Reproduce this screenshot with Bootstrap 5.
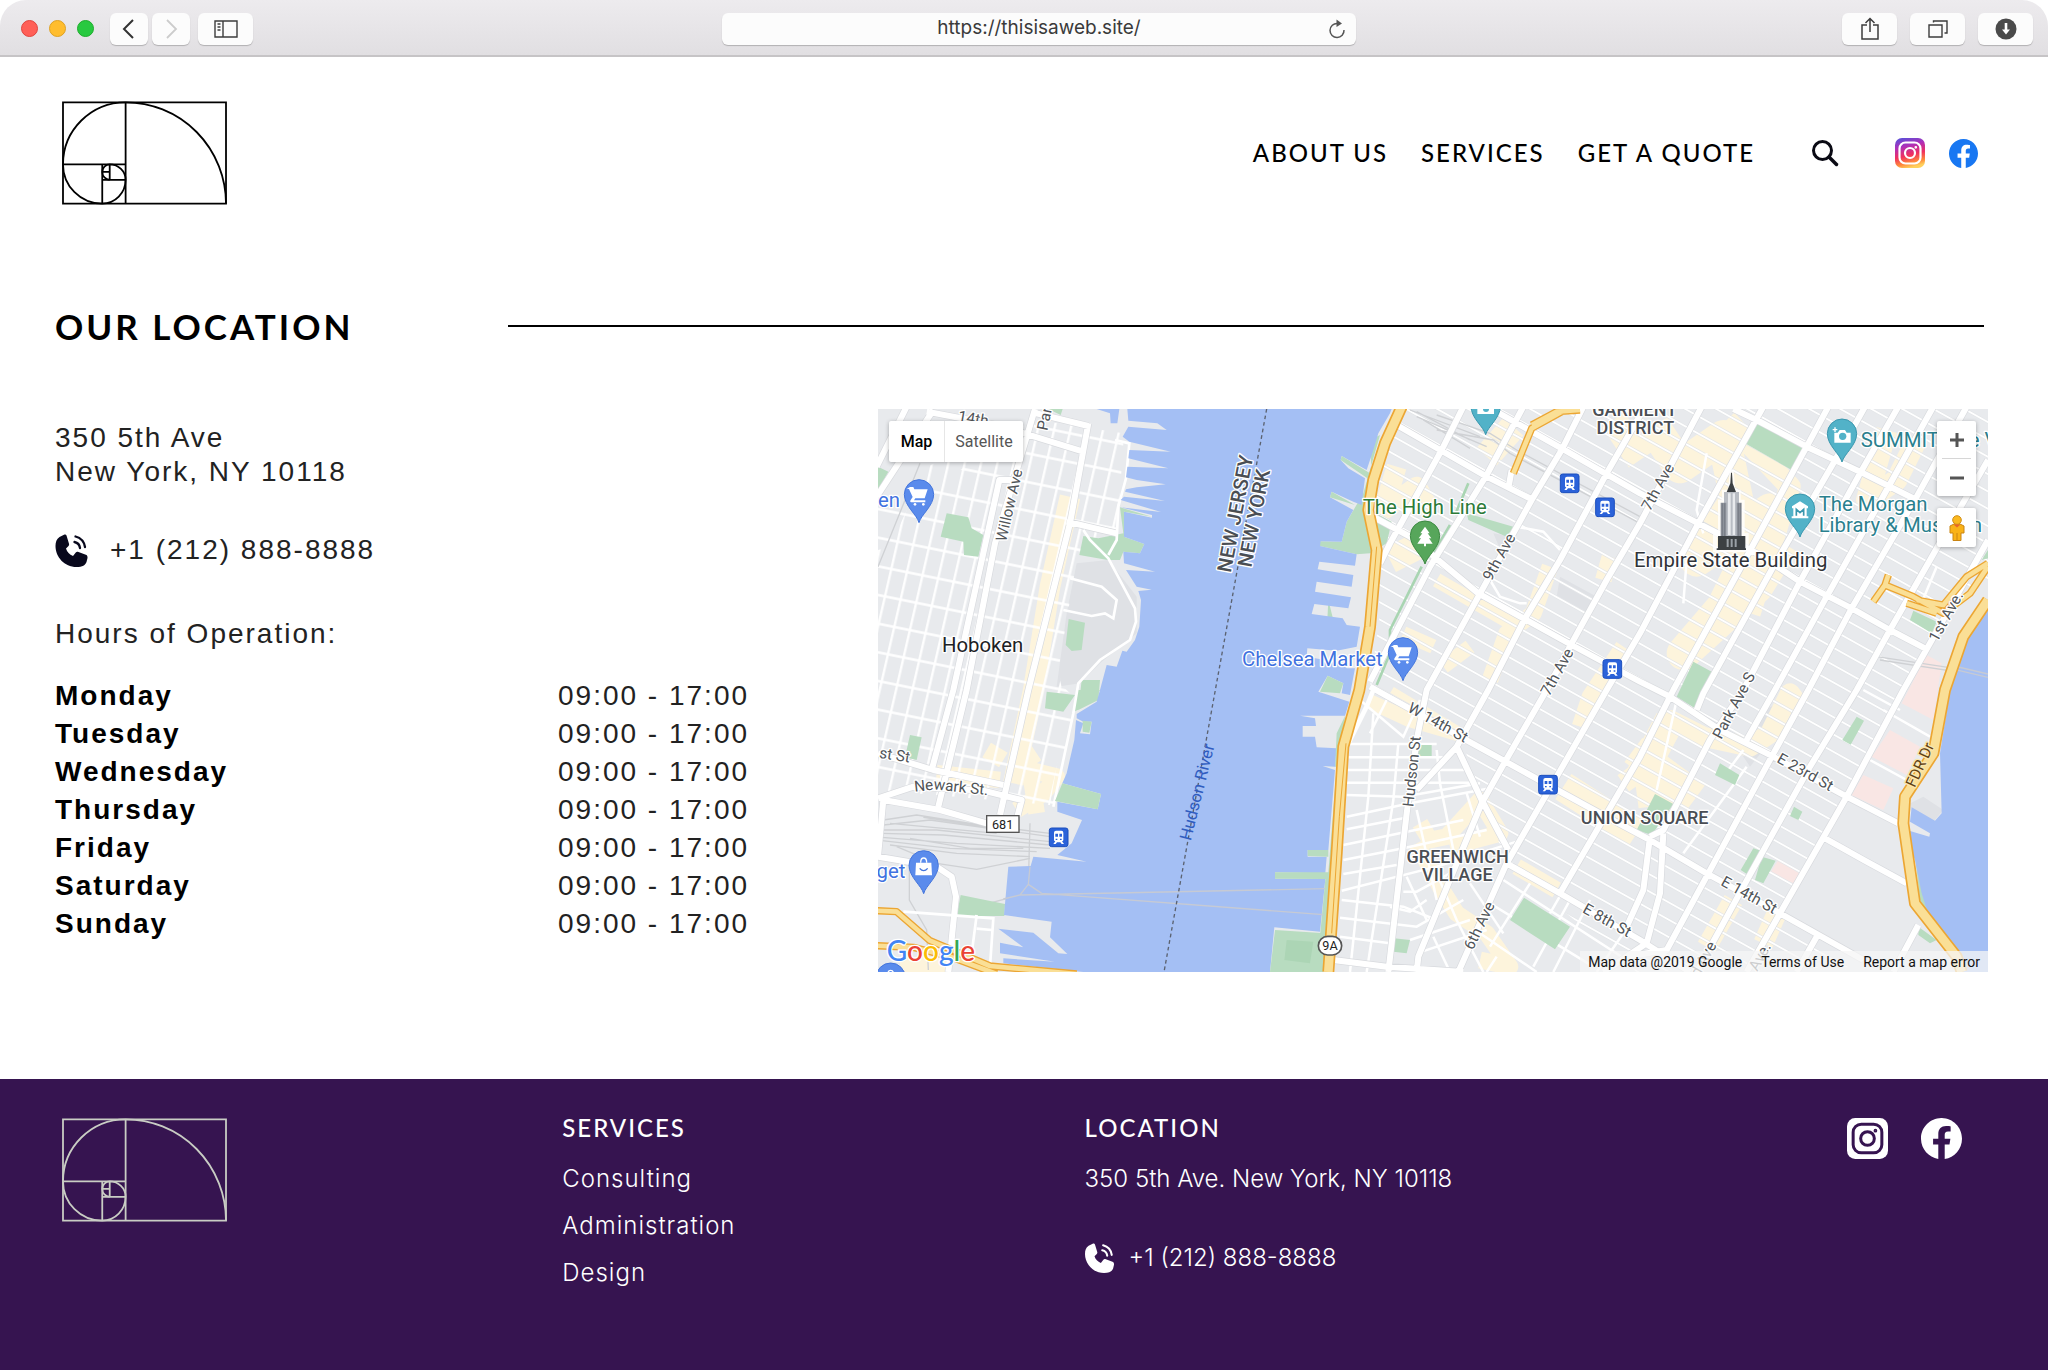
<!DOCTYPE html>
<html lang="en">
<head>
<meta charset="utf-8">
<meta name="viewport" content="width=device-width, initial-scale=1">
<title>Our Location</title>
<link href="https://cdn.jsdelivr.net/npm/bootstrap@5.3.0/dist/css/bootstrap.min.css" rel="stylesheet">
<style>
:root { --ink: #000; --plum: #361450; --edge: 55px; }
body { background: #fff; color: var(--ink); font-family: "Liberation Sans", Arial, sans-serif; }
svg { display: block; }
a { color: inherit; text-decoration: none; }

/* browser frame */
.chrome { height: 57px; background: linear-gradient(#edebee, #e1dfe2); border-bottom: 2px solid #c6c4c6; border-radius: 26px 26px 0 0; padding: 2px 15px 0 21px; display: grid; grid-template-columns: 701fr 634px 677fr; align-items: center; }
.dot { width: 17px; height: 17px; border-radius: 50%; border: 1px solid; }
.dot-r { background: #ff5f57; border-color: #e0443e; }
.dot-y { background: #ffbd2e; border-color: #dea123; }
.dot-g { background: #28c940; border-color: #1dad2b; }
.tool { height: 32px; padding: 0; border: 0; border-radius: 6px; background: #fcfcfc; box-shadow: 0 1px 1px rgba(0,0,0,.22); display: flex; align-items: center; justify-content: center; }
.tool-s { width: 38px; } .tool-m { width: 55px; }
.address-box { height: 32px; border-radius: 6px; background: #fcfcfc; box-shadow: 0 1px 1px rgba(0,0,0,.22); position: relative; }
.address-box input { width: 100%; height: 30px; border: 0; background: none; text-align: center; font: 19px/26px Inter, sans-serif; color: #3a3a3a; padding: 0; outline: 0; }
.address-box button { position: absolute; right: 10px; top: 6px; border: 0; background: none; padding: 0; }

/* site header */
.site-head { padding: 44px 70px 0 62px; height: 190px; }
.logo { width: 165px; height: 104px; }
.caps { font-family: Lato, sans-serif; font-weight: 500; letter-spacing: 2px; text-transform: uppercase; }
.site-nav { font-size: 24px; line-height: 30px; gap: 33px; }

/* location */
.wrap { padding: 0 60px 0 var(--edge); }
.title-row { display: grid; grid-template-columns: 453px 1fr; align-items: center; height: 158px; }
.title-row h1 { font-size: 35px; line-height: 40px; font-weight: 700; letter-spacing: 3px; margin: 0; }
.title-row hr { margin: 0 4px 0 0; border: 0; height: 2px; background: #000; opacity: 1; }
.place { display: grid; grid-template-columns: 823fr 1110fr; padding: 4px 0 107px; }
.info { font-size: 28px; line-height: 34px; letter-spacing: 2px; padding-top: 12px; color: #222; }
.info address { margin: 0; }
.phone { gap: 22px; margin-top: 44px; }
.hours-title { font-size: 28px; line-height: 34px; font-weight: 400; margin: 50px 0 26px; }
.hours th, .hours td { padding: 0; line-height: 38px; }
.hours th { font-weight: 700; text-align: left; width: 503px; color: #000; }

/* map */
.map { position: relative; aspect-ratio: 1110 / 563; overflow: hidden; font-family: Roboto, sans-serif; align-self: start; }
.map > svg { width: 100%; height: 100%; }
.map-card { position: absolute; background: #fff; border-radius: 2px; box-shadow: 0 1px 4px rgba(0,0,0,.3); }
.map-card button { border: 0; background: none; padding: 0; }
.map-type { left: 11px; top: 12px; height: 41px; font-size: 16px; }
.map-type button { height: 41px; width: 55px; font-weight: 500; color: #000; }
.map-type button + button { width: 79px; border-left: 1px solid #e6e6e6; font-weight: 400; color: #565656; }
.map-zoom { right: 12px; top: 12px; width: 39px; }
.map-zoom button { width: 39px; height: 37px; display: flex; align-items: center; justify-content: center; }
.map-zoom span { display: block; height: 1px; background: #d6d6d6; margin: 0 5px; }
.map-man { right: 12px; top: 99px; width: 39px; height: 39px; }
.map-man button { width: 39px; height: 39px; display: flex; align-items: center; justify-content: center; }
.map-credit { position: absolute; right: 0; bottom: 0; height: 21px; padding: 2px 8px 0; font-size: 14px; line-height: 19px; gap: 19px; color: #111; background: rgba(245,245,245,.75); white-space: nowrap; }
.place-name { font: 61px Roboto, sans-serif; }
.area-name { font: 500 54px Roboto, sans-serif; fill: #4a4e54; }
.state-name { font-size: 60px; }
.street-name { font: 46px Roboto, sans-serif; fill: #505458; }
.river-name { font: 50px Roboto, sans-serif; }
.halo text { paint-order: stroke; stroke: #fff; stroke-width: 8px; stroke-linejoin: round; }
.halo .river-name { fill: #2f5cc0; stroke: none; }
.halo .drive-name { fill: #5f4014; stroke: #fbe6ad; }
.google { font: 500 84px Lato, sans-serif; }

/* footer */
.site-foot { background: var(--plum); color: #fff; height: 291px; padding: 39px 86px 0 62px; font: 300 24px/30px Inter, sans-serif; letter-spacing: 1px; display: grid; grid-template-columns: 500fr 522fr 762fr auto; align-items: start; }
.site-foot h2 { font-size: 24px; line-height: 24px; margin: -2px 0 0; }
.site-foot ul { margin: 24px 0 0; }
.site-foot li { padding-bottom: 17px; }
.foot-place ul { letter-spacing: 0; }
</style>
<script src="https://cdn.jsdelivr.net/npm/bootstrap@5.3.0/dist/js/bootstrap.bundle.min.js"></script>
</head>
<body>

<svg width="0" height="0" class="position-absolute" aria-hidden="true">
  <defs>
    <symbol id="fib" viewBox="-1 -1 166 104"><g fill="none" stroke="currentColor" stroke-width="1.8"><path d="M0 0H164V102H0ZM63 0V102M0 62.5H63M39.5 62.5V102M39.5 78H63M47 62.5V78M39.5 70H47"/><path d="M164 102A101 102 0 0 0 63 0A63 62.500 0 0 0 0 62.500A39.500 39.500 0 0 0 39.500 102A23.500 24 0 0 0 63 78A16 15.500 0 0 0 47 62.500A7.500 7.500 0 0 0 39.500 70A8 8 0 0 0 47 78"/></g></symbol>
    <symbol id="call" viewBox="0 0 32 33"><path fill="currentColor" d="M9 .5 4 3C1 5 0 8 0 12 0 23 9 33 21 33c6 0 9-2 10-5l1-4c.2-1.500-.3-2.300-1-3l-8-3c-1.300-.5-2-.3-2.700.5L17.500 22C14 20.500 11.500 18 10.500 14.500L13 12c.6-.7.8-1.400.5-2.200L11 1.500C10.600.5 10 .2 9 .5Z"/><path fill="none" stroke="currentColor" stroke-width="2.300" stroke-linecap="round" d="M20 2.500A13 13 0 0 1 29.500 13M19 8A7 7 0 0 1 24.500 14"/></symbol>
    <symbol id="fb" viewBox="0 0 16 16"><path fill="currentColor" d="M16 8.049c0-4.446-3.582-8.05-8-8.05C3.580 0-.002 3.603-.002 8.050c0 4.017 2.926 7.347 6.750 7.951v-5.625h-2.030V8.050H6.750V6.275c0-2.017 1.195-3.131 3.022-3.131.876 0 1.791.157 1.791.157v1.980h-1.009c-.993 0-1.303.621-1.303 1.258v1.510h2.218l-.354 2.326H9.250V16c3.824-.604 6.750-3.934 6.750-7.951"/></symbol>
    <linearGradient id="ig1" x1=".2" y1="0" x2=".45" y2="1"><stop offset="0" stop-color="#5b4fd8"/><stop offset=".3" stop-color="#b02fb8"/><stop offset=".6" stop-color="#f0305f"/><stop offset=".85" stop-color="#ff8a3a"/><stop offset="1" stop-color="#ffd15c"/></linearGradient>
    <symbol id="ig" viewBox="0 0 30 30"><g fill="none" stroke-width="2.200"><rect x="4.500" y="4.500" width="21" height="21" rx="6"/><circle cx="15" cy="15" r="5"/><circle cx="20.800" cy="9.300" r=".6" stroke-width="1.500"/></g></symbol>
    <path id="pin" d="M0 0C-6-24-44-50-44-85A44 44 0 1 1 44-85C44-50 6-24 0 0Z"/>
    <g id="cart" fill="#fff"><path d="M-27-107h10l3 7h40l-9 27h-28l-4 6h34v6h-42c-4 0-4-4-2-7l6-9-11-24h-7z"/><circle cx="-12" cy="-55" r="4"/><circle cx="13" cy="-55" r="4"/></g>
    <g id="metro"><rect x="-28" y="-28" width="56" height="56" rx="7" fill="#2b62d9" stroke="#1c4fbd" stroke-width="3"/><path fill="#fff" d="M-14-14q0-6 6-6h16q6 0 6 6v22q0 4-4 4l6 8h-7l-4-5h-10l-4 5h-7l6-8q-4 0-4-4z"/><path fill="#2b62d9" d="M-10-11h8v9h-8zM2-11h8v9H2zM-9 4h5v4h-5zM4 4h5v4H4z"/></g>
    <pattern id="xst" width="200" height="52" patternUnits="userSpaceOnUse" patternTransform="translate(0 -14) skewY(29.2)"><path d="M0 26H200" stroke="#d9dbdf" stroke-width="10"/><path d="M0 26H200" stroke="#fff" stroke-width="7.500"/></pattern>
    <pattern id="hobH" width="200" height="86" patternUnits="userSpaceOnUse" patternTransform="translate(0 24) skewY(11.5)"><path d="M0 40H200" stroke="#fff" stroke-width="7"/></pattern>
    <pattern id="hobV" width="49" height="200" patternUnits="userSpaceOnUse" patternTransform="translate(10 0) skewX(-13)"><path d="M24 0V200" stroke="#fff" stroke-width="7"/></pattern>
    <path id="majors" fill="none" stroke-linejoin="round" d="M1530 490 1560 430 1715 150 1780 20M1500 845 1680 500 1850 225 1960 20M1915 265 1925 210M1555 1716 1610 1240 1640 1020 1670 870 1825 590 1985 300 2075 150 2140 20M1640 1170 1760 1040 1855 870 1965 655 2070 480 2210 220 2325 20M1760 1040 1835 1200 1915 1350M1640 1716 1645 1670 1760 1390 1835 1210 1905 1085 2030 870 2105 730 2210 540 2310 370 2495 20M1765 1716 1910 1390 2210 870 2310 700 2485 370 2680 20M2070 1480 2310 1070 2410 870 2630 470 2810 140 2875 20M2480 930 2500 880 2710 500 2890 190 2985 20M2340 1310 2380 1290 2520 1020 2620 870 2790 545 2970 220 3085 20M2630 1020 2715 870 2870 590 3050 270 3190 20M2270 1670 2390 1650 2515 1420 2705 1070 2815 870 2945 625 3140 290 3290 20M2480 1716 2620 1460 2820 1100 2960 870 3060 690 3220 410 3354 180M2630 1716 2730 1540 2930 1190 3100 870 3180 730 3354 420M2340 1310 2320 1470 2270 1580M2380 1300 2370 1480 2330 1630 2200 1716M2840 1610 2780 1716M3145 1575 3070 1716M1580 75 1850 230 1990 300M1870 30 2075 145 2310 280 2485 370 2670 465 2790 545 2945 625 3060 690 3165 745M1500 345 1620 410 1825 580 2105 735 2310 845 2400 890 2550 990 2710 1070 2930 1190 3085 1270M1500 860 1770 1010 2190 1240 2340 1320 2510 1420 2730 1540 2980 1680M1910 1390 2070 1480 2310 1620 2460 1716M2590 27 2660 60 2810 140 2970 215 3140 300M2865 1315 2990 1385 3110 1450M1390 1680 1550 1700 1780 1716M655 70 600 370 475 870 390 1245M430 240H388L250 870 185 1110M495 27 375 430 290 870 205 1220M170 35 380 75 640 155M500 40 655 78M590 365 740 400M24 1060 190 1110 400 1155M24 1195 130 1160 340 1172 455 1200 442 1250M40 1200 210 1230 350 1270M40 1200 24 1370 200 1400 245 1430 258 1490 235 1716M110 20 20 200M190 30 20 290"/>
    <path id="shore-roads" fill="none" stroke-linejoin="round" d="M1595 20 1545 130 1510 240 1495 330 1520 450 1500 680 1468 870 1420 1040 1400 1360 1375 1716M3354 600 3280 710 3225 870 3190 1060 3105 1190 3100 1270 3135 1510 3260 1670 3275 1716"/>
    <path id="ramps" fill="none" stroke-linejoin="round" d="M20 1532 80 1535 180 1622 360 1698 620 1722M20 1637 130 1642 240 1670 380 1722M1930 220 1985 85 2090 27M1985 75 2060 35 2130 30M3354 490 3290 530 3220 615 3140 600M3010 605 3045 555 3130 590 3220 640 3300 580 3354 500M3110 610 3200 640M3045 555 3055 525"/>
  </defs>
</svg>

<div class="chrome">
  <div class="d-flex align-items-center">
    <span class="d-flex me-3" style="gap:11px"><i class="dot dot-r"></i><i class="dot dot-y"></i><i class="dot dot-g"></i></span>
    <button class="tool tool-s" aria-label="Back" type="button"><svg width="14" height="20" viewBox="0 0 14 20" fill="none" stroke="#333" stroke-width="2"><path d="M11 1 2 10l9 9"/></svg></button>
    <button class="tool tool-s ms-1" aria-label="Forward" type="button"><svg width="14" height="20" viewBox="0 0 14 20" fill="none" stroke="#ccc" stroke-width="1.800"><path d="m3 1 9 9-9 9"/></svg></button>
    <button class="tool tool-m ms-2" aria-label="Sidebar" type="button"><svg width="24" height="18" viewBox="0 0 24 18" fill="none" stroke="#3d3d3d" stroke-width="1.400"><path d="M1 1H23V17H1ZM9 1V17M3.500 4h3M3.500 7h3M3.500 10h3"/></svg></button>
  </div>
  <div class="address-box"><label class="visually-hidden" for="url">Address</label><input id="url" type="text" value="https://thisisaweb.site/">
    <button aria-label="Reload" type="button"><svg width="18" height="20" viewBox="0 0 18 20"><path d="M9.500 4.500A7 7 0 1 0 16 11" fill="none" stroke="#555" stroke-width="1.500"/><path d="m8.500.5 5.500 4-5.500 3.500Z" fill="#555"/></svg></button></div>
  <div class="d-flex justify-content-end" style="gap:13px">
    <button class="tool tool-m" aria-label="Share" type="button"><svg width="18" height="24" viewBox="0 0 18 24" fill="none" stroke="#3d3d3d" stroke-width="1.500"><path d="M6 8H1V22H17V8H12M9 15V2M4.500 6 9 1.500 13.500 6"/></svg></button>
    <button class="tool tool-m" aria-label="Tabs" type="button"><svg width="20" height="20" viewBox="0 0 20 20" fill="none" stroke="#3d3d3d" stroke-width="1.400"><path d="M1 6H14V18H1ZM5.500 3.500V2H19V14H16.500"/></svg></button>
    <button class="tool tool-m" aria-label="Downloads" type="button"><svg width="22" height="22" viewBox="0 0 22 22"><circle cx="11" cy="11" r="10.500" fill="#4a4a4a"/><path d="M9.700 5h2.600v6.500H15l-4 5-4-5h2.700Z" fill="#fff"/></svg></button>
  </div>
</div>

<header class="site-head d-flex justify-content-between align-items-start">
  <a href="#" aria-label="Home"><svg class="logo"><use href="#fib"/></svg></a>
  <nav class="d-flex align-items-center logo w-auto">
    <div class="site-nav caps d-flex"><a href="#">About us</a><a href="#">Services</a><a href="#">Get a quote</a></div>
    <a href="#" class="ms-5 ps-2" aria-label="Search"><svg width="28" height="28" viewBox="0 0 28 28" fill="none" stroke="#0a0a14" stroke-width="3"><circle cx="11.500" cy="11.500" r="9"/><path d="m18 18 7.500 7.500" stroke-linecap="round" stroke-width="3.500"/></svg></a>
    <a href="#" class="ms-5 ps-2" aria-label="Instagram"><svg width="30" height="30" viewBox="0 0 30 30"><rect width="30" height="30" rx="7" fill="url(#ig1)"/><use href="#ig" stroke="#fff"/></svg></a>
    <a href="#" class="ms-4" aria-label="Facebook"><svg width="29" height="29" color="#1877f2"><use href="#fb"/></svg></a>
  </nav>
</header>

<main class="wrap">
  <div class="title-row"><h1 class="caps">Our location</h1><hr></div>
  <div class="place">
    <section class="info">
      <address>350 5th Ave<br>New York, NY 10118</address>
      <a class="phone d-flex align-items-center" href="tel:+12128888888"><svg width="33" height="33" color="#08081c"><use href="#call"/></svg>+1 (212) 888-8888</a>
      <h2 class="hours-title">Hours of Operation:</h2>
      <table class="hours">
        <tbody>
          <tr><th scope="row">Monday</th><td>09:00 - 17:00</td></tr>
          <tr><th scope="row">Tuesday</th><td>09:00 - 17:00</td></tr>
          <tr><th scope="row">Wednesday</th><td>09:00 - 17:00</td></tr>
          <tr><th scope="row">Thursday</th><td>09:00 - 17:00</td></tr>
          <tr><th scope="row">Friday</th><td>09:00 - 17:00</td></tr>
          <tr><th scope="row">Saturday</th><td>09:00 - 17:00</td></tr>
          <tr><th scope="row">Sunday</th><td>09:00 - 17:00</td></tr>
        </tbody>
      </table>
    </section>

    <section class="map" aria-label="Map">
      <svg viewBox="24 27 3330 1689" preserveAspectRatio="xMidYMid slice">
        <rect x="24" y="27" width="3330" height="1689" fill="#e8eaed"/>
        <!-- darker blocks -->
        <g fill="#dfe1e5"><path d="M620 490 715 480 800 590 800 700 690 790 630 850 560 860 590 640Z"/><path d="M2070 530 2180 590 2160 650 2060 590ZM1870 400 1930 410 1900 470ZM2680 930 2750 900 2720 1010 2660 980ZM2600 1040 2680 1050 2640 1100ZM3100 1220 3160 1190 3220 1230 3190 1265Z"/></g>
        <!-- commercial blocks -->
        <g fill="none" stroke="#fdf4dc" stroke-linejoin="round">
          <path d="M600 290 540 560 490 870 430 1150" stroke-width="62"/>
          <path d="M350 1050 400 1080M200 1120 390 1140M470 1080 500 1060M440 1230 520 1180 560 1130 480 1110 500 1240" stroke-width="50"/>
          <path d="M1580 200 1540 330 1640 260 1680 330" stroke-width="60"/>
          <path d="M1850 170 1930 80M2230 60 2310 180M1640 440 1560 480" stroke-width="80"/>
          <path d="M1500 905 1620 960 1760 1000 1560 880M1600 700 1690 740M1700 540 1960 690M1800 740 1720 800" stroke-width="44"/>
          <path d="M2350 80 2430 200 2560 110 2600 300 2480 480 2700 330 2560 620 2440 760 2660 560 2740 430" stroke-width="100"/>
          <path d="M2570 60 2760 260 2640 640M3050 90 2990 300 3080 240 3140 120" stroke-width="64"/>
          <path d="M2040 500 1990 640 1910 700 1860 840M2200 540 2220 470M2130 980 2160 890 2260 740" stroke-width="50"/>
          <path d="M2260 1150 2330 1100 2400 960 2500 1010 2640 1040 2700 1000 2760 880 2790 920" stroke-width="60"/>
          <path d="M2300 1180 2450 1160M2290 1050 2480 1190M2080 1160 2300 1300M2310 1130 2400 960" stroke-width="90"/>
          <path d="M1650 1270 1680 1320 1730 1310 1830 1200 1890 1300 1740 1340M1640 1330 1710 1460 1760 1540 1850 1600 1920 1700 1830 1680M1940 1400 2060 1470" stroke-width="50"/>
          <path d="M2590 1500 2510 1640M2720 1540 2680 1630M90 1700 230 1700" stroke-width="60"/>
        </g>
        <g fill="#f9e6e4"><path d="M3170 765 3215 790 3190 960 3095 910ZM3060 990 3150 1040 3110 1125 3005 1070ZM2980 1125 3070 1165 3040 1230 2945 1185ZM2725 1380 2790 1420 2770 1450 2700 1420Z"/></g>

        <!-- minor streets -->
        <path fill="url(#hobH)" d="M24 300 240 230 500 60 760 130 740 420 620 480 560 840 620 900 550 1215 24 1170Z"/>
        <path fill="url(#hobV)" d="M24 450 60 440 170 200 500 60 760 100 740 420 620 480 570 840 590 920 540 1215 24 1170Z"/>
        <path fill="url(#xst)" d="M1570 27H3354V540L3240 640 3165 745 3020 1010 2930 1190 2730 1540 2980 1700 2300 1716 1910 1390 1770 1010 1500 860 1530 640 1510 340Z"/>
        <g fill="none" stroke="#fff" stroke-width="7.500">
          <path d="M1440 1032H1700M1430 1072H1730M1430 1110H1790M1430 1148H1800M1430 1185 1600 1190 1830 1150M1430 1250 1620 1210 1860 1165M1430 1288 1600 1255M1420 1335 1780 1260M1420 1380 1600 1345 1850 1290M1420 1422 1580 1395M1415 1472 1700 1400 1940 1325M1415 1500 1600 1520 1700 1560M1410 1553 1640 1580 1780 1500M1410 1610 1560 1630M1620 1620 1800 1560M1640 1660 1850 1590M1600 1475 1640 1475 1740 1420M1560 1520 1620 1535 1670 1500"/>
          <path d="M1510 940 1495 1190 1440 1716M1585 1030 1570 1200 1490 1716M1550 900 1500 1000M1470 900 1600 1010 1650 900M1640 1230 1700 1500M1700 1050 1710 1150 1750 1350M1790 1180 1830 1310M1610 1430 1670 1560M1700 1420 1760 1560 1800 1640 1840 1716M1800 1450 1900 1600M1690 1610 1740 1716"/>
          <path d="M1900 1440 2270 1680M1860 1510 2170 1700M1830 1600 2000 1716M1980 1450 1860 1640M2100 1500 1990 1700M2160 1500 2050 1716M2260 1600 2180 1716M1880 1670 1850 1716M2040 1540 2270 1140"/>
          <path d="M2420 900 2360 1170M2500 400 2480 330 2510 160M2450 480 2440 610M2630 1100 2440 1360M3200 500 3150 620M2560 1130 2620 1050M3040 930 3180 1010M3000 1080 3110 1140M2980 870 3090 930"/>
          <path d="M1860 540 1890 590 1950 610 1970 610M1940 380 2020 395 2070 450"/>
        </g>
        <path fill="#e8eaed" d="M2885 1335 3110 1455 3140 1560 3080 1680 3000 1690 2745 1545Z"/>

        <!-- rail yards -->
        <g fill="none" stroke="#cfd1d4" stroke-width="4">
          <path d="M40 1260 140 1245 330 1275 540 1300M40 1275 180 1260 540 1310M36 1290 200 1290 540 1325M36 1300 220 1305 540 1335M36 1312 260 1330 540 1345M36 1322 240 1345 500 1355M60 1335 260 1360 480 1370M80 1340 200 1390 320 1408 480 1375M60 1270 220 1285 380 1300M120 1315 300 1345 460 1345M160 1252 420 1290"/>
          <path d="M480 1270 475 1453 450 1485 365 1508 335 1545M475 1453 515 1480M450 1485 1366 1466M515 1480 1360 1544M118 1400 118 1500 170 1590 175 1710M24 500 150 190"/>
          <path d="M1620 30 1830 110M1640 50 1850 140M1660 60 1800 145M1700 90 1870 120 1920 160 2310 370M1700 45 1860 100 1940 150 2310 350M1640 35 1800 120M3020 770 3354 820M3030 780 3354 830"/>
        </g>

        <!-- parks -->
        <g fill="#b8dcc0">
          <path d="M230 340 295 352 305 385 340 405 325 470 282 465 280 425 212 410ZM596 657 645 668 635 750 605 753 587 735ZM640 408 685 415 760 400 750 322 846 350 762 335 762 410 823 432 810 460 760 455 750 480 713 480 628 465ZM530 875 615 885 580 935 525 925ZM620 870 690 870 665 910 612 935ZM635 840 690 840 685 900 625 930ZM120 1005 155 1012 140 1080 105 1072ZM272 1485 405 1512 403 1548 260 1548ZM535 27H578L572 45ZM24 200 55 215 24 270Z"/>
          <path d="M1565 365 1510 335 1500 120 1530 105 1480 280 1430 365 1415 425 1350 424 1350 438 1460 463 1500 460 1550 430ZM1790 340 1930 380 1910 410 1795 360ZM1375 600 1400 700H1370Z"/>
          <path d="M2660 63 2800 140 2765 210 2625 130ZM2470 785 2525 815 2475 925 2420 890ZM2355 1182 2410 1212 2345 1305 2300 1290ZM2550 1090 2608 1125 2595 1155 2535 1125ZM2960 950 2982 962 2942 1034 2917 1020ZM2772 1220 2797 1235 2785 1260 2760 1248ZM2650 1345 2672 1352 2635 1425 2612 1410ZM2675 1370 2717 1382 2680 1450 2655 1440ZM3130 632 3200 665 3185 700 3120 660ZM3145 1580 3200 1620 3180 1630 3145 1605ZM3135 1365 3175 1540 3150 1500ZM1962 1493 2100 1580 2055 1648 1920 1560ZM1645 1035H1685V1068H1640ZM1572 1615 1620 1620 1610 1660 1570 1655ZM3354 450 3335 480 3354 475Z"/>
        </g>
        <path d="M1795 250 1755 345M1740 375 1690 460M1655 500 1560 690 1560 740M1560 760 1520 855" fill="none" stroke="#a9d5b2" stroke-width="8"/>

        <!-- avenues and wide streets -->
        <use href="#majors" stroke="#d8dade" stroke-width="22"/>
        <use href="#majors" stroke="#fff" stroke-width="18"/>
        <path fill="none" stroke="#fff" stroke-width="8" d="M640 390 660 420 715 475 795 625 798 665 780 720 690 780 625 850 610 940 550 1220M600 535 695 560 740 600 730 655 705 640 665 648 580 630M735 120 778 130 768 235 745 320 740 420 715 465M100 1535 370 1555 360 1700M320 1545 300 1700M320 1586 365 1590"/>

        <!-- Hudson and East River -->
        <path fill="#a4bff4" d="M772 27 775 62 862 70 890 90 775 80 758 110 778 125 902 155 778 150 775 175 895 205 772 200 768 232 800 240 887 253 800 262 768 268 765 275 885 303 762 290 752 300 873 336 752 322 846 345V353L762 335V410L823 432 810 460 760 455 762 490 855 515 768 510 800 560 845 569 805 573 813 600 808 680 795 720 770 755 757 752 740 800 710 795 690 870 680 905 620 942 620 955 640 965 665 965 660 1003 630 1000 640 970 618 960 613 1020 590 1120 577 1150 693 1182 683 1228 562 1205V1235L636 1260 605 1330 562 1365 650 1385 490 1370 482 1398 415 1400 402 1545 545 1565 540 1612 592 1662 565 1660 490 1598 385 1586 460 1642 390 1628V1660L555 1685 400 1675V1690L640 1716H1200L1213 1582 1350 1595 1366 1437 1215 1436V1417L1366 1420 1370 1370H1313V1350H1375L1395 1110 1358 1098 1395 1100 1400 1045 1340 1042 1335 1010H1298V978H1338L1335 955 1290 947H1425L1438 905 1345 875 1373 827 1420 850 1415 880 1440 885 1455 805H1430L1420 790 1310 770 1312 745 1400 752 1460 740 1470 680 1430 675 1418 655 1325 642 1333 612 1435 625 1443 592 1335 575 1340 545 1445 560 1450 525 1343 508 1348 485 1455 497 1460 463 1350 438 1352 424 1415 425 1430 365 1450 330 1380 292 1385 275 1450 305 1475 315 1485 235 1435 205 1412 180 1415 168 1490 210 1510 150 1525 100 1560 40 1565 27Z"/>
        <path fill="#a4bff4" d="M680 27H748L742 70H722L720 40ZM3354 630 3280 730 3245 800 3240 870 3210 1060 3215 1240 3195 1262 3125 1222 3120 1265 3180 1300 3178 1310 3110 1290V1310L3135 1380 3155 1480 3180 1560 3245 1640 3270 1716H3354Z"/>
        <g fill="#b8dcc0"><path d="M1200 1716 1215 1590 1365 1600 1355 1716ZM1215 1436V1417H1375L1400 1100 1358 1098 1395 1100 1400 1000 1425 948 1410 1110 1360 1716H1340L1366 1437ZM1313 1368V1350H1375V1370ZM1380 292 1385 275 1455 315ZM1412 180 1415 168 1500 220 1500 240ZM1350 875 1373 827 1420 850 1410 880ZM577 1150 693 1182 683 1228 555 1203ZM638 962 665 965 658 998 638 995Z"/></g>
        <path d="M1250 1620 1330 1625 1320 1690 1243 1680Z" fill="#acd5b5"/>
        <g fill="none" stroke="#c6cad4" stroke-width="4"><path d="M480 1400 475 1453 450 1485 400 1497M475 1453 515 1480M450 1485 1366 1466M515 1480 1360 1544M3240 795 3354 822M3240 805 3354 832"/></g>
        <path d="M1190 27 1036 870 882 1716" fill="none" stroke="#5b6270" stroke-width="4" stroke-dasharray="11 9"/>
        <path d="M1510 870 1490 920 1430 1040" fill="none" stroke="#fff" stroke-width="14"/>

        <!-- highways -->
        <use href="#shore-roads" stroke="#eca633" stroke-width="36"/>
        <use href="#ramps" stroke="#eca633" stroke-width="22"/>
        <use href="#shore-roads" stroke="#fadf96" stroke-width="26"/>
        <use href="#ramps" stroke="#fadf96" stroke-width="14"/>
        <path fill="none" stroke="#eca633" stroke-width="3" d="M1428 1030 1408 1250 1385 1600M1520 440 1500 680"/>

        <!-- labels -->
        <g class="halo">
          <g class="street-name">
            <text transform="translate(262 63) rotate(10)">14th</text>
            <text transform="translate(532 94) rotate(-78)">Park</text>
            <text transform="translate(408 427) rotate(-77)">Willow Ave</text>
            <text transform="translate(26 1073) rotate(9)">st St</text>
            <text transform="translate(134 1175) rotate(-6)">Ne</text><text transform="translate(190 1168) rotate(6)">wark St.</text>
            <text transform="translate(1864 545) rotate(-61)">9th Ave</text>
            <text transform="translate(2038 890) rotate(-61)">7th Ave</text>
            <text transform="translate(2340 335) rotate(-61)">7th Ave</text>
            <text transform="translate(1610 933) rotate(29)">W 14th St</text>
            <text transform="translate(1630 1222) rotate(-84)">Hudson St</text>
            <text transform="translate(1808 1652) rotate(-64)">6th Ave</text>
            <text transform="translate(2135 1536) rotate(29)">E 8th St</text>
            <text transform="translate(2550 1454) rotate(29)">E 14th St</text>
            <text transform="translate(2718 1085) rotate(29)">E 23rd St</text>
            <text transform="translate(2554 1020) rotate(-62)">Park Ave S</text>
            <text transform="translate(3202 728) rotate(-61)">1st Ave.</text>
            <text transform="translate(2466 1770) rotate(-61)">3rd Ave</text>
            <text transform="translate(2662 1716) rotate(-61)">Ave.</text>
            <text class="drive-name" transform="translate(3134 1165) rotate(-65)">FDR Dr</text>
          </g>
          <g class="area-name" text-anchor="middle">
            <text class="state-name" transform="translate(1116 345) rotate(-79)">NEW JERSEY</text>
            <text class="state-name" transform="translate(1172 358) rotate(-79)">NEW YORK</text>
            <text x="2294" y="47">GARMENT</text><text x="2296" y="102">DISTRICT</text>
            <text x="2324" y="1272">UNION SQUARE</text>
            <text x="1763" y="1389">GREENWICH</text><text x="1762" y="1444">VILLAGE</text>
          </g>
          <text class="river-name" transform="translate(962 1324) rotate(-76)">Hudson River</text>
          <g class="place-name">
            <text x="216" y="755" fill="#202124">Hoboken</text>
            <text x="2292" y="502" fill="#303338">Empire State Building</text>
            <g fill="#2c7a38"><text x="1478" y="342">The High Line</text></g>
            <g fill="#3f72e0"><text x="1116" y="797">Chelsea Market</text><text x="90" y="320" text-anchor="end">en</text><text x="106" y="1433" text-anchor="end">get</text></g>
            <g fill="#2a808e"><text x="2972" y="140">SUMMIT One V</text><text x="2846" y="333">The Morgan</text><text x="2846" y="396">Library &amp; Museum</text></g>
          </g>
        </g>

        <!-- pins -->
        <g stroke-width="3">
          <g transform="translate(147 368)"><use href="#pin" fill="#5a8bec" stroke="#4375dc"/><use href="#cart"/></g>
          <g transform="translate(1599 842)"><use href="#pin" fill="#5a8bec" stroke="#4375dc"/><use href="#cart"/></g>
          <g transform="translate(161 1481)"><use href="#pin" fill="#5a8bec" stroke="#4375dc"/><path d="M-23-93H23L25-55H-25Z" fill="#fff"/><path d="M-9-93q0-14 9-14t9 14" fill="none" stroke="#fff" stroke-width="4"/><path d="M-12-76q12 14 24 0" fill="none" stroke="#4375dc" stroke-width="4"/></g>
          <g transform="translate(62 1818)"><use href="#pin" fill="#5a8bec" stroke="#4375dc"/><path d="M-9-93q0-14 9-14t9 14" fill="none" stroke="#fff" stroke-width="4"/></g>
          <g transform="translate(1665 492)"><use href="#pin" fill="#57a65b" stroke="#3d8a42"/><path d="m0-112 14 20h-6l11 15h-7l11 16H3v8h-6v-8h-20l11-16h-7l11-15h-6Z" fill="#fff"/></g>
          <g fill="#52b2c8" stroke="#3a97ae"><use href="#pin" transform="translate(1847 104)"/><use href="#pin" transform="translate(2916 186)"/><use href="#pin" transform="translate(2790 411)"/></g>
          <path d="M1822 20h50v22h-50z" fill="#fff"/><circle cx="1848" cy="27" r="9" fill="#52b2c8"/>
          <path d="M2893 98h10l6-8h16l5 8h12v30h-49ZM2893 82h4v5h5v4h-5v5h-4v-5h-5v-4h5z" fill="#fff"/><circle cx="2918" cy="109" r="11" fill="#52b2c8"/>
          <path d="m2790 304 24 15v6h-4v24h5v6h-50v-6h5v-24h-4v-6Z" fill="#fff"/><path d="M2779 347v-19l11 10 11-10v19" fill="none" stroke="#3a97ae" stroke-width="5"/>
        </g>
        <use href="#metro" transform="translate(566 1312)"/><use href="#metro" transform="translate(2099 250)"/><use href="#metro" transform="translate(2205 322)"/><use href="#metro" transform="translate(2227 807)"/><use href="#metro" transform="translate(2034 1154)"/>
        <rect x="350" y="1247" width="97" height="50" fill="#fff" stroke="#555" stroke-width="4"/><text x="398" y="1286" text-anchor="middle" font-size="38" fill="#222">681</text>
        <rect x="1345" y="1609" width="70" height="56" rx="28" fill="#fff" stroke="#555" stroke-width="5"/><text x="1380" y="1650" text-anchor="middle" font-size="38" fill="#222">9A</text>

        <!-- Empire State Building -->
        <g><path d="M2535 450V405H2550V305H2562V275H2580L2585 210 2590 275H2606V305H2618V405H2630V450Z" fill="none" stroke="#fff" stroke-width="12" opacity=".8"/><path d="M2583 218h3l2 32 10 26h-28l11-26Z" fill="#3c4043"/><path d="M2562 276h45v134h-45z" fill="#b9bdc4"/><path d="M2552 308h17v102h-17zM2600 308h15v102h-15z" fill="#8d929b"/><path d="M2574 280h8v125h-8zM2588 280h7v125h-7z" fill="#e8eaed"/><path d="M2557 310v98M2564 310v98M2605 310v98M2611 310v98" stroke="#6b7078" stroke-width="2"/><path d="M2544 408h82v37h2v5h-88v-5h4z" fill="#3c4043"/><path d="M2570 417h6v24h-6zM2582 417h6v24h-6zM2594 417h6v24h-6z" fill="#9aa0a6"/></g>

        <text class="google" x="50" y="1682" stroke="#fff" stroke-width="8" paint-order="stroke"><tspan fill="#4285f4">G</tspan><tspan fill="#ea4335">o</tspan><tspan fill="#fbbc04">o</tspan><tspan fill="#4285f4">g</tspan><tspan fill="#34a853">l</tspan><tspan fill="#ea4335">e</tspan></text>
      </svg>
      <div class="map-card map-type d-flex"><button type="button">Map</button><button type="button">Satellite</button></div>
      <div class="map-card map-zoom"><button type="button" aria-label="Zoom in"><svg width="14" height="14"><path d="M7 0V14M0 7H14" stroke="#555" stroke-width="3"/></svg></button><span></span><button type="button" aria-label="Zoom out"><svg width="14" height="14"><path d="M0 7H14" stroke="#555" stroke-width="3"/></svg></button></div>
      <div class="map-card map-man"><button type="button" aria-label="Street view"><svg width="16" height="26" viewBox="0 0 16 26"><path d="M5 9H11L15 11V18H12V25.500H4V18H1V11Z" fill="#f9b218" stroke="#c98412"/><circle cx="8" cy="5" r="4.300" fill="#fbb91f" stroke="#d08d15"/><path d="m4.500 9.500 3.500 3 3.500-3Z" fill="#e8642c"/><path d="M8 18V25" stroke="#c98412"/></svg></button></div>
      <div class="map-credit d-flex"><span>Map data @2019 Google</span><a href="#">Terms of Use</a><a href="#">Report a map error</a></div>
    </section>
  </div>
</main>

<footer class="site-foot">
  <svg class="logo" color="#c9cdc4"><use href="#fib"/></svg>
  <div><h2 class="caps">Services</h2>
    <ul class="list-unstyled"><li><a href="#">Consulting</a></li><li><a href="#">Administration</a></li><li><a href="#">Design</a></li></ul></div>
  <div class="foot-place"><h2 class="caps">Location</h2>
    <ul class="list-unstyled"><li>350 5th Ave. New York, NY 10118</li><li class="pt-3 mt-3"><a class="d-flex align-items-center" style="gap:15px" href="tel:+12128888888"><svg width="29" height="30"><use href="#call"/></svg>+1 (212) 888-8888</a></li></ul></div>
  <div class="d-flex" style="gap:33px">
    <a href="#" aria-label="Instagram"><svg width="41" height="41" viewBox="0 0 30 30"><rect width="30" height="30" rx="6" fill="#fff"/><use href="#ig" stroke="#361450"/></svg></a>
    <a href="#" aria-label="Facebook"><svg width="41" height="41"><use href="#fb"/></svg></a>
  </div>
</footer>
</body>
</html>
